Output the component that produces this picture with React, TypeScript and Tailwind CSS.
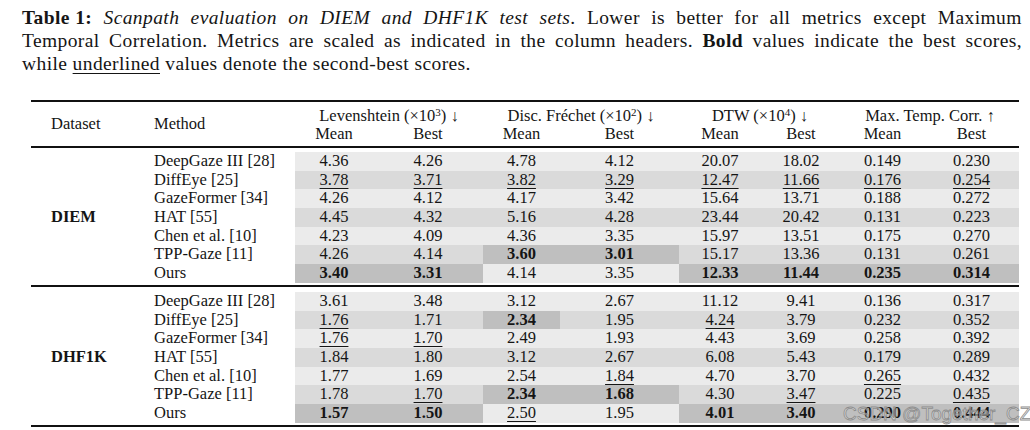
const COLS =
  "grid grid-cols-[109px_155px_78px_110px_77px_119px_82px_80px_83px_95px]";

// "*" = best (bold, dark cell), "_" = second best (underlined)
const diem: [string, string][] = [
  ["DeepGaze III [28]", "4.36 4.26 4.78 4.12 20.07 18.02 0.149 0.230"],
  ["DiffEye [25]", "3.78_ 3.71_ 3.82_ 3.29_ 12.47_ 11.66_ 0.176_ 0.254_"],
  ["GazeFormer [34]", "4.26 4.12 4.17 3.42 15.64 13.71 0.188 0.272"],
  ["HAT [55]", "4.45 4.32 5.16 4.28 23.44 20.42 0.131 0.223"],
  ["Chen et al. [10]", "4.23 4.09 4.36 3.35 15.97 13.51 0.175 0.270"],
  ["TPP-Gaze [11]", "4.26 4.14 3.60* 3.01* 15.17 13.36 0.131 0.261"],
  ["Ours", "3.40* 3.31* 4.14 3.35 12.33* 11.44* 0.235* 0.314*"],
];

const dhf1k: [string, string][] = [
  ["DeepGaze III [28]", "3.61 3.48 3.12 2.67 11.12 9.41 0.136 0.317"],
  ["DiffEye [25]", "1.76_ 1.71 2.34* 1.95 4.24_ 3.79 0.232 0.352"],
  ["GazeFormer [34]", "1.76_ 1.70_ 2.49 1.93 4.43 3.69 0.258 0.392"],
  ["HAT [55]", "1.84 1.80 3.12 2.67 6.08 5.43 0.179 0.289"],
  ["Chen et al. [10]", "1.77 1.69 2.54 1.84_ 4.70 3.70 0.265_ 0.432"],
  ["TPP-Gaze [11]", "1.78 1.70_ 2.34* 1.68* 4.30 3.47_ 0.225 0.435_"],
  ["Ours", "1.57* 1.50* 2.50_ 1.95 4.01* 3.40* 0.290* 0.444*"],
];

const Section = ({ name, rows }: { name: string; rows: [string, string][] }) => (
  <div className={`${COLS} auto-rows-[18.7px] leading-[18.7px]`}>
    <div className="row-span-7 flex items-center pl-[20px] font-bold">{name}</div>
    {rows.map(([method, vals], i) => {
      const stripe = i % 2 === 0 ? "bg-[#ebebeb]" : "bg-[#dadada]";
      return [
        <div key={`m${i}`} className="pl-[14px] whitespace-nowrap">
          {method}
        </div>,
        ...vals.split(" ").map((raw, j) => {
          const best = raw.endsWith("*");
          const second = raw.endsWith("_");
          const v = raw.replace(/[*_]/g, "");
          return (
            <div
              key={`${i}-${j}`}
              className={`text-center ${best ? "bg-[#bfbfbf] font-bold" : stripe}`}
            >
              <span className={second ? "underline decoration-1 underline-offset-[3px]" : ""}>
                {v}
              </span>
            </div>
          );
        }),
      ];
    })}
  </div>
);

export default function App() {
  return (
    <div className="relative w-[1030px] h-[430px] overflow-hidden bg-white text-[#151515] font-['Liberation_Serif',serif]">
      {/* Caption */}
      <div className="pt-[6px] pl-[22px] pr-[8px] text-[19.5px] leading-[23px] tracking-[0.4px]">
        <div className="whitespace-nowrap flex justify-between">
          {"Table 1: | Scanpath | evaluation | on | DIEM | and | DHF1K | test | sets. | Lower | is | better | for | all | metrics | except | Maximum"
            .split(" | ")
            .map((w, i) => (
              <span
                key={i}
                className={i === 0 ? "font-bold" : i < 8 ? "italic" : ""}
              >
                {i === 8 ? (
                  <>
                    <i>sets</i>.
                  </>
                ) : (
                  w
                )}
              </span>
            ))}
        </div>
        <div className="whitespace-nowrap flex justify-between">
          {"Temporal Correlation. Metrics are scaled as indicated in the column headers. Bold values indicate the best scores,"
            .split(" ")
            .map((w, i) => (
              <span key={i} className={w === "Bold" ? "font-bold" : ""}>
                {w}
              </span>
            ))}
        </div>
        <div>
          while <span className="underline decoration-1 underline-offset-[3px]">underlined</span> values
          denote the second-best scores.
        </div>
      </div>

      {/* Table */}
      <div className="mt-[25px] ml-[31px] w-[988px] text-[16.5px]">
        <div className="h-[2px] bg-[#111]" />
        <div className={`${COLS} pt-[5px] pb-[4px]`}>
          <div className="row-span-2 flex items-center pl-[20px]">Dataset</div>
          <div className="row-span-2 flex items-center pl-[14px]">Method</div>
          <div className="col-span-2 text-center leading-[18px] whitespace-nowrap">
            Levenshtein (×10<sup className="text-[11px]">3</sup>) ↓
          </div>
          <div className="col-span-2 text-center leading-[18px] whitespace-nowrap">
            Disc. Fréchet (×10<sup className="text-[11px]">2</sup>) ↓
          </div>
          <div className="col-span-2 text-center leading-[18px] whitespace-nowrap">
            DTW (×10<sup className="text-[11px]">4</sup>) ↓
          </div>
          <div className="col-span-2 text-center leading-[18px] whitespace-nowrap">
            Max. Temp. Corr. ↑
          </div>
          {["Mean", "Best", "Mean", "Best", "Mean", "Best", "Mean", "Best"].map((h, i) => (
            <div key={i} className="text-center leading-[17px]">
              {h}
            </div>
          ))}
        </div>
        <div className="h-[1.5px] bg-[#111]" />
        <div className="mt-[4.5px]">
          <Section name="DIEM" rows={diem} />
        </div>
        <div className="mt-[2.6px] h-[1.5px] bg-[#111]" />
        <div className="mt-[5px]">
          <Section name="DHF1K" rows={dhf1k} />
        </div>
        <div className="mt-[2.5px] h-[2px] bg-[#111]" />
      </div>

      {/* watermark */}
      <div className="absolute left-[843px] top-[400px] font-['Liberation_Sans',sans-serif] text-[19px] text-white/40 [-webkit-text-stroke:0.8px_#8c8c8c] whitespace-nowrap">
        CSDN @Together_CZ
      </div>
    </div>
  );
}
